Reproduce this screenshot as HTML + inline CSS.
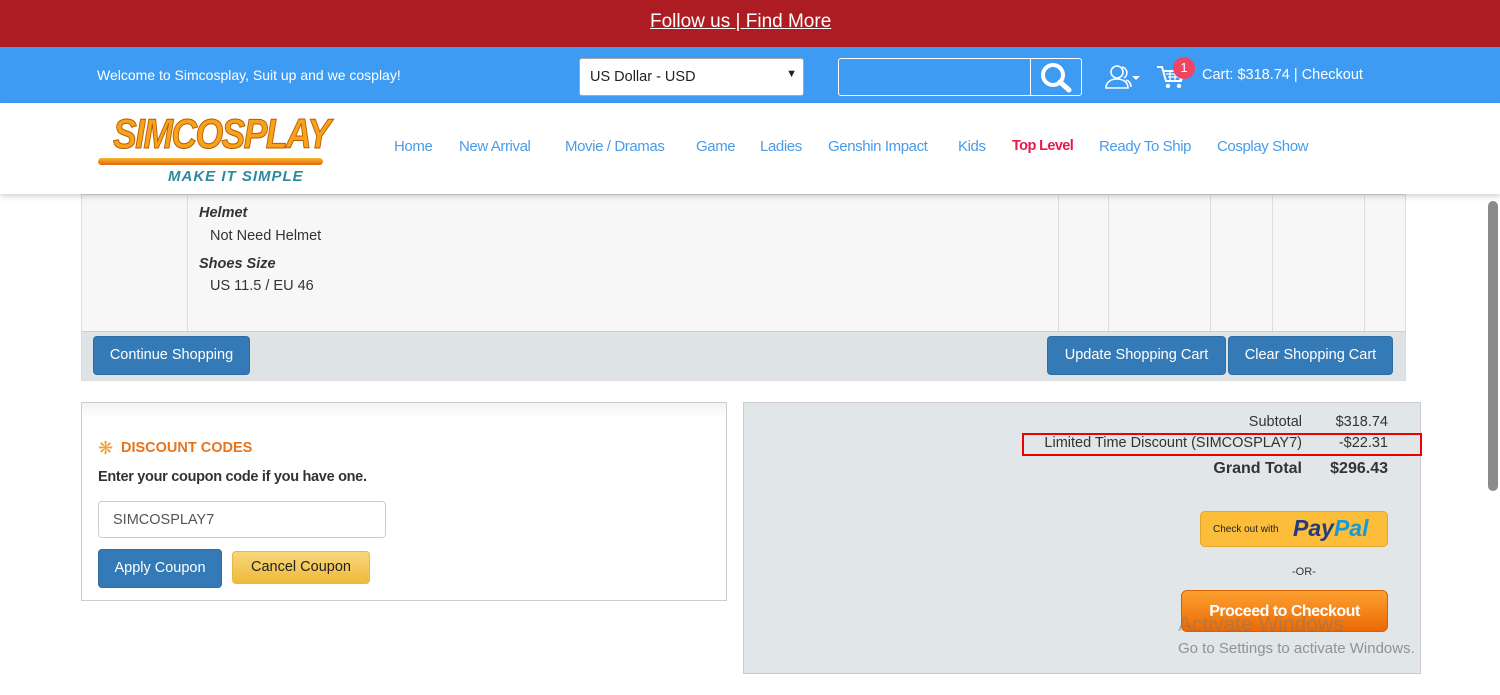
<!DOCTYPE html>
<html><head><meta charset="utf-8"><style>
*{margin:0;padding:0;box-sizing:border-box}
body{width:1500px;height:695px;overflow:hidden;background:#fff;font-family:"Liberation Sans",sans-serif;position:relative;color:#333}
.a{position:absolute}
.btn{position:absolute;background:#337ab7;color:#fff;border-radius:4px;font-size:14.5px;text-align:center;line-height:37px;border:1px solid #2e6da4;white-space:nowrap}
.nav{position:absolute;top:138px;font-size:15px;color:#4a9be8;letter-spacing:-0.4px;white-space:nowrap}
.t{position:absolute;font-size:14.5px;color:#333;text-align:right;white-space:nowrap}
</style></head><body>
<div class="a" style="left:0;top:0;width:1500px;height:47px;background:#ad1c22"></div>
<div class="a" style="left:650px;top:11px;font-size:19px;color:#fff;text-decoration:underline">Follow us | Find More</div>
<div class="a" style="left:0;top:47px;width:1500px;height:56px;background:#3d9bf4"></div>
<div class="a" style="left:97px;top:67px;font-size:14px;color:#fff">Welcome to Simcosplay, Suit up and we cosplay!</div>
<div class="a" style="left:579px;top:58px;width:225px;height:38px;background:#fff;border:1px solid #aaa;border-radius:3px;font-size:14.5px;padding:10px 10px;color:#222">US Dollar - USD<span style="position:absolute;right:6px;top:9px;font-size:11px">&#9660;</span></div>
<div class="a" style="left:838px;top:58px;width:244px;height:38px;border:1px solid #fff;border-radius:3px"></div>
<div class="a" style="left:1030px;top:58px;width:1px;height:38px;background:#fff"></div>
<svg class="a" style="left:1037px;top:61px" width="38" height="32" viewBox="0 0 38 32"><circle cx="16" cy="14" r="10" fill="none" stroke="#fff" stroke-width="4"/><line x1="23" y1="21" x2="32" y2="29" stroke="#fff" stroke-width="5" stroke-linecap="round"/></svg>
<svg class="a" style="left:1104px;top:64px" width="38" height="26" viewBox="0 0 38 26"><circle cx="13" cy="8" r="6" fill="none" stroke="#fff" stroke-width="1.6"/><path d="M2 24c0-6 5-9 11-9s11 3 11 9z" fill="none" stroke="#fff" stroke-width="1.6"/><path d="M18 3a6 6 0 0 1 2 11M22 16c3 1 5 3 5 7" fill="none" stroke="#fff" stroke-width="1.6"/><path d="M28 12h8l-4 4z" fill="#fff"/></svg>
<svg class="a" style="left:1156px;top:64px" width="30" height="26" viewBox="0 0 30 26"><path d="M1 3h5l4 14h15l3-10H8" fill="none" stroke="#fff" stroke-width="2"/><path d="M10 10h16M12 13h13M14 7v10M19 7v10M24 7v10" stroke="#fff" stroke-width="1.2"/><circle cx="12" cy="22" r="2.2" fill="#fff"/><circle cx="23" cy="22" r="2.2" fill="#fff"/></svg>
<div class="a" style="left:1173px;top:57px;width:22px;height:22px;border-radius:11px;background:#ef4565;color:#fff;font-size:13px;text-align:center;line-height:22px">1</div>
<div class="a" style="left:1202px;top:67px;font-size:14.5px;color:#fff">Cart: $318.74 | Checkout</div>
<div class="a" style="left:0;top:103px;width:1500px;height:91px;background:#fff;box-shadow:0 2px 6px rgba(0,0,0,.2);z-index:2"></div>
<div class="a" style="left:98px;top:108px;z-index:3;width:230px;height:82px">
<div class="a" style="left:15px;top:2px;font:italic bold 42px 'Liberation Sans',sans-serif;color:#f7a21a;letter-spacing:-2px;transform:scaleX(.85);transform-origin:left;-webkit-text-stroke:1px #b85a00">SIMCOSPLAY</div>
<div class="a" style="left:0;top:50px;width:225px;height:7px;background:linear-gradient(#f7b733,#e2650b);border-radius:4px"></div>
<div class="a" style="left:70px;top:60px;font:italic bold 15px 'Liberation Sans',sans-serif;color:#2b8a9e;letter-spacing:1px">MAKE IT SIMPLE</div>
</div>
<div style="position:absolute;z-index:3;top:0;left:0">
<span class="nav" style="left:394px">Home</span>
<span class="nav" style="left:459px">New Arrival</span>
<span class="nav" style="left:565px">Movie / Dramas</span>
<span class="nav" style="left:696px">Game</span>
<span class="nav" style="left:760px">Ladies</span>
<span class="nav" style="left:828px">Genshin Impact</span>
<span class="nav" style="left:958px">Kids</span>
<span class="nav" style="left:1012px;color:#e6194b;font-weight:bold;font-size:14.5px;letter-spacing:-0.6px">Top Level</span>
<span class="nav" style="left:1099px">Ready To Ship</span>
<span class="nav" style="left:1217px">Cosplay Show</span>
</div>
<div class="a" style="left:81px;top:194px;width:1325px;height:187px;background:#f7f7f7;border:1px solid #ddd"></div>
<div class="a" style="left:187px;top:194px;width:1px;height:137px;background:#ddd"></div>
<div class="a" style="left:1058px;top:194px;width:1px;height:137px;background:#ddd"></div>
<div class="a" style="left:1108px;top:194px;width:1px;height:137px;background:#ddd"></div>
<div class="a" style="left:1210px;top:194px;width:1px;height:137px;background:#ddd"></div>
<div class="a" style="left:1272px;top:194px;width:1px;height:137px;background:#ddd"></div>
<div class="a" style="left:1364px;top:194px;width:1px;height:137px;background:#ddd"></div>
<div class="a" style="left:199px;top:205px;font:italic bold 14.5px 'Liberation Sans',sans-serif;color:#333">Helmet</div>
<div class="a" style="left:210px;top:228px;font-size:14.5px">Not Need Helmet</div>
<div class="a" style="left:199px;top:256px;font:italic bold 14.5px 'Liberation Sans',sans-serif;color:#333">Shoes Size</div>
<div class="a" style="left:210px;top:278px;font-size:14.5px">US 11.5 / EU 46</div>
<div class="a" style="left:82px;top:331px;width:1323px;height:49px;background:#dee3e6;border-top:1px solid #ccd"></div>
<div class="btn" style="left:93px;top:336px;width:157px">Continue Shopping</div>
<div class="btn" style="left:1047px;top:336px;width:179px">Update Shopping Cart</div>
<div class="btn" style="left:1228px;top:336px;width:165px">Clear Shopping Cart</div>
<div class="a" style="left:81px;top:402px;width:646px;height:199px;border:1px solid #ccc;background:linear-gradient(#f2f2f2,#fff 15px)"></div>
<div class="a" style="left:98px;top:438px;font-size:18px;color:#f0a030">&#10059;</div>
<div class="a" style="left:121px;top:440px;font-size:14.5px;font-weight:bold;color:#e8731a">DISCOUNT CODES</div>
<div class="a" style="left:98px;top:469px;font-size:14.5px;font-weight:bold;color:#333;letter-spacing:-.3px">Enter your coupon code if you have one.</div>
<div class="a" style="left:98px;top:501px;width:288px;height:37px;border:1px solid #ccc;border-radius:4px;background:#fff;font-size:14.5px;padding:10px 14px;color:#555">SIMCOSPLAY7</div>
<div class="btn" style="left:98px;top:549px;width:124px">Apply Coupon</div>
<div class="btn" style="left:232px;top:551px;width:138px;height:33px;line-height:31px;background:linear-gradient(#f8d77a,#f0b93c);border-color:#e8b84a;color:#222">Cancel Coupon</div>
<div class="a" style="left:743px;top:402px;width:678px;height:272px;background:#e1e6e9;border:1px solid #ccc"></div>
<div class="t" style="right:198px;top:414px">Subtotal</div>
<div class="t" style="right:112px;top:414px">$318.74</div>
<div class="t" style="right:198px;top:435px">Limited Time Discount (SIMCOSPLAY7)</div>
<div class="t" style="right:112px;top:435px">-$22.31</div>
<div class="a" style="left:1022px;top:433px;width:400px;height:23px;border:2px solid #e00"></div>
<div class="t" style="right:198px;top:460px;font-weight:bold;font-size:16px">Grand Total</div>
<div class="t" style="right:112px;top:460px;font-weight:bold;font-size:16px">$296.43</div>
<div class="a" style="left:1200px;top:511px;width:188px;height:36px;background:#fcbe3a;border:1px solid #e3a52a;border-radius:5px"></div>
<div class="a" style="left:1213px;top:524px;font-size:10px;color:#222">Check out with</div>
<div class="a" style="left:1293px;top:515px;font:italic bold 23px 'Liberation Sans',sans-serif;color:#253b80">Pay<span style="color:#179bd7">Pal</span></div>
<div class="a" style="left:1292px;top:566px;font-size:11px;color:#333">-OR-</div>
<div class="a" style="left:1181px;top:590px;width:207px;height:42px;background:linear-gradient(#fca030,#ec6a06);border:1px solid #d86000;border-radius:6px;color:#fff;font-weight:bold;font-size:16px;text-align:center;line-height:42px;letter-spacing:-.5px">Proceed to Checkout</div>
<div class="a" style="left:1178px;top:613px;font-size:21px;color:rgba(120,120,120,.45)">Activate Windows</div>
<div class="a" style="left:1178px;top:640px;font-size:15px;color:rgba(110,110,110,.7)">Go to Settings to activate Windows.</div>
<div class="a" style="left:1488px;top:201px;width:10px;height:290px;background:#8a8a8a;border-radius:5px"></div>
</body></html>
